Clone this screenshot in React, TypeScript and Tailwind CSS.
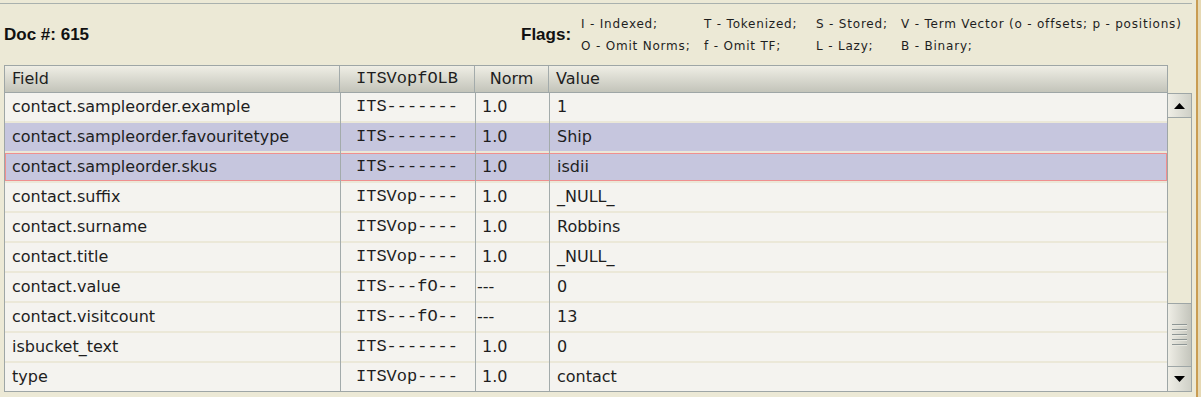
type Row = { field: string; flags: string; norm: string; value: string; selected?: boolean; focused?: boolean };

const rows: Row[] = [
  { field: "contact.sampleorder.example", flags: "ITS-------", norm: "1.0", value: "1" },
  { field: "contact.sampleorder.favouritetype", flags: "ITS-------", norm: "1.0", value: "Ship", selected: true },
  { field: "contact.sampleorder.skus", flags: "ITS-------", norm: "1.0", value: "isdii", selected: true, focused: true },
  { field: "contact.suffix", flags: "ITSVop----", norm: "1.0", value: "_NULL_" },
  { field: "contact.surname", flags: "ITSVop----", norm: "1.0", value: "Robbins" },
  { field: "contact.title", flags: "ITSVop----", norm: "1.0", value: "_NULL_" },
  { field: "contact.value", flags: "ITS---fO--", norm: "---", value: "0" },
  { field: "contact.visitcount", flags: "ITS---fO--", norm: "---", value: "13" },
  { field: "isbucket_text", flags: "ITS-------", norm: "1.0", value: "0" },
  { field: "type", flags: "ITSVop----", norm: "1.0", value: "contact" },
];

const flagLines = [
  ["I - Indexed;", "T - Tokenized;", "S - Stored;", "V - Term Vector (o - offsets; p - positions)"],
  ["O - Omit Norms;", "f - Omit TF;", "L - Lazy;", "B - Binary;"],
];

function Arrow({ up }: { up?: boolean }) {
  return (
    <svg width="11" height="6" viewBox="0 0 11 6">
      {up ? <path d="M0 6 L5.5 0 L11 6 Z" fill="#000" /> : <path d="M0 0 L5.5 6 L11 0 Z" fill="#000" />}
    </svg>
  );
}

export default function App() {
  return (
    <div className="flex h-[397px] w-[1201px] overflow-hidden bg-[#ece9d6] font-['DejaVu_Sans',sans-serif] text-[#1e1e1e]">
      <div className="flex w-[1196px] flex-col">
        {/* ligne du cadre */}
        <div className="mr-[4px] mt-[3px] h-px bg-[#a9b1ae]" />

        {/* en-tête : document + légende des flags */}
        <div className="flex h-[61px] items-center">
          <div className="w-[521px] pl-[4px] font-['Liberation_Sans',sans-serif] text-[17px] font-bold text-[#111]">
            Doc #: 615
          </div>
          <div className="font-['Liberation_Sans',sans-serif] text-[17px] font-bold text-[#111]">Flags:</div>
          <div className="ml-[10px] grid grid-cols-[123px_112px_85px_auto] text-[12px] leading-[22px] tracking-[0.8px]">
            {flagLines.flat().map((t) => (
              <span key={t} className="whitespace-nowrap">
                {t}
              </span>
            ))}
          </div>
        </div>

        {/* table */}
        <div className="ml-[4px] flex w-[1188px] flex-col">
          <div className="flex h-[28px] w-[1164px] border border-[#9ea6a6] bg-gradient-to-b from-[#efeee5] to-[#c3c4ba] text-[16px]">
            <div className="flex w-[335px] items-center border-r border-[#a3abab] pl-[7px]">Field</div>
            <div className="flex w-[135px] items-center justify-center border-r border-[#a3abab] font-['Liberation_Mono',monospace] text-[17px]">
              ITSVopfOLB
            </div>
            <div className="flex w-[74px] items-center justify-center border-r border-[#a3abab]">Norm</div>
            <div className="flex flex-1 items-center pl-[7px]">Value</div>
          </div>

          <div className="flex h-[299px] border-b border-l border-[#9ea6a6]">
            <div className="flex w-[1162px] flex-col overflow-hidden">
              {rows.map((r) => (
                <div key={r.field} className="flex h-[30px] shrink-0 flex-col">
                  <div
                    className={`flex flex-1 text-[16px] ${r.selected ? "bg-[#c6c6de]" : "bg-[#f4f3ef]"} ${
                      r.focused ? "shadow-[inset_0_0_0_1px_#ef8f8f]" : ""
                    }`}
                  >
                    <div className="flex w-[336px] items-center border-r border-[#a3abab] pl-[7px]">{r.field}</div>
                    <div className="flex w-[135px] items-center border-r border-[#a3abab] pl-[15px] font-['Liberation_Mono',monospace] text-[17px]">
                      {r.flags}
                    </div>
                    <div
                      className={`flex w-[74px] items-center border-r border-[#a3abab] ${
                        r.norm === "---" ? "pl-[1px]" : "pl-[6px]"
                      }`}
                    >
                      {r.norm}
                    </div>
                    <div className="flex flex-1 items-center pl-[7px]">{r.value}</div>
                  </div>
                  <div className="flex h-[2px]">
                    <div className="w-[336px] border-r border-[#a3abab] bg-[#ebe8d8]" />
                    <div className="w-[135px] border-r border-[#a3abab] bg-[#ebe8d8]" />
                    <div className="w-[74px] border-r border-[#a3abab] bg-[#ebe8d8]" />
                    <div className="flex-1 bg-[#ebe8d8]" />
                  </div>
                </div>
              ))}
            </div>

            {/* barre de défilement */}
            <div className="flex w-[25px] flex-col border-x border-[#9ea6a6]">
              <div className="flex h-[25px] items-center justify-center border-y border-[#9ea6a6] bg-gradient-to-r from-[#efeee6] to-[#cfd0c7]">
                <Arrow up />
              </div>
              <div className="h-[185px] bg-[#ece9d6]" />
              <div className="flex h-[64px] flex-col items-center justify-center gap-[3px] border-y border-[#9ea6a6] bg-gradient-to-r from-[#efeee6] to-[#c4c5bc]">
                {[0, 1, 2, 3, 4].map((i) => (
                  <div key={i} className="h-[2px] w-[15px] border-t border-[#8e9695] bg-[#e8e8e0]" />
                ))}
              </div>
              <div className="flex flex-1 items-center justify-center bg-gradient-to-r from-[#efeee6] to-[#cfd0c7]">
                <Arrow />
              </div>
            </div>
          </div>
        </div>
      </div>

      {/* bord droit */}
      <div className="w-[2px] bg-[#c99c52]" />
      <div className="w-[3px] bg-[#e6d9b4]" />
    </div>
  );
}
